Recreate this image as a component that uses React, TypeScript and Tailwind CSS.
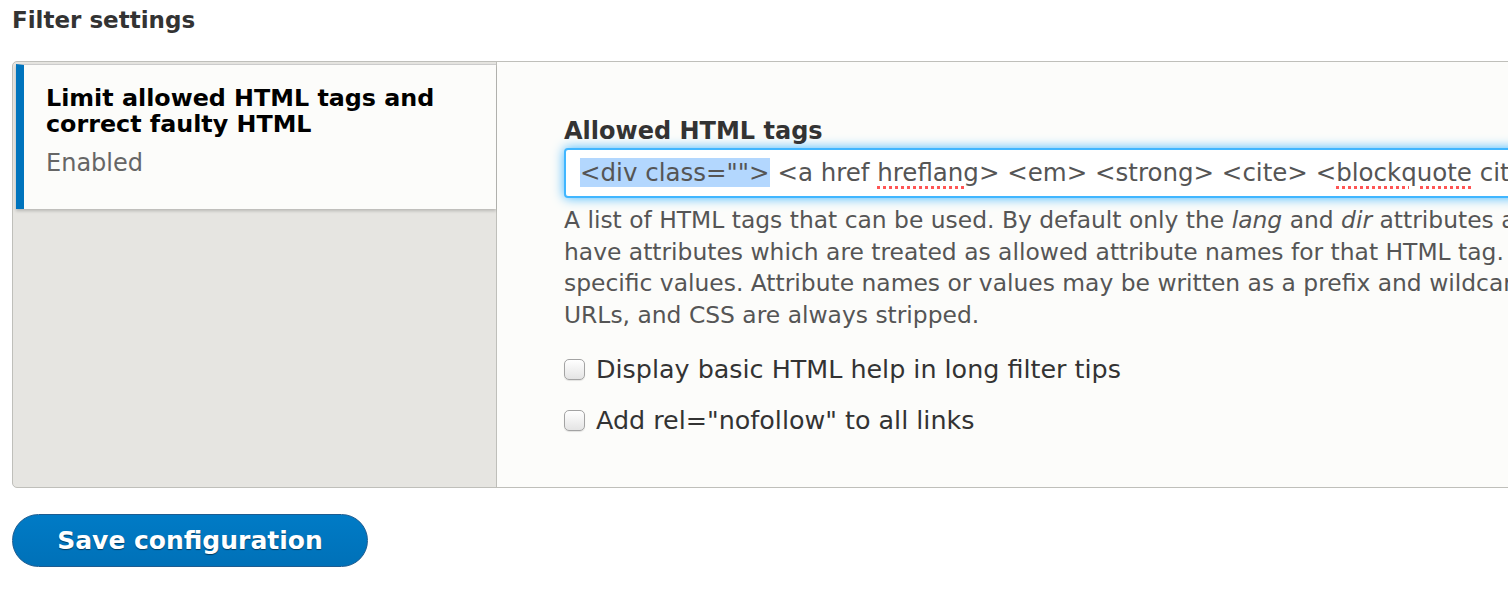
import React from "react";

function Checkbox({ label }: { label: string }) {
  return (
    <label className="flex items-center gap-[11px] leading-[32px] text-[25.4px] text-[#333]">
      <span className="inline-block h-[21px] w-[21px] shrink-0 rounded-[5px] border border-[#a3a3a3] bg-gradient-to-b from-white to-[#e4e4e4] shadow-[0_1px_1px_rgba(0,0,0,0.1)]" />
      {label}
    </label>
  );
}

export default function App() {
  return (
    <div
      className="h-[614px] w-[1508px] overflow-hidden bg-white pl-[12px]"
      style={{ fontFamily: '"DejaVu Sans", Verdana, sans-serif' }}
    >
      <h2 className="pt-[6px] text-[23px] font-bold leading-[28px] text-[#333]">Filter settings</h2>

      <div className="mt-[27px] flex h-[427px] w-[1600px] rounded-l-[5px] border border-[#bfbfba] bg-[#e6e5e1]">
        {/* vertical tabs menu */}
        <div className="w-[484px] shrink-0 border-r border-[#bfbfba] pt-[2px] pl-[3px]">
          <div className="border-t border-[#ccc] border-l-[8px] border-l-[#0074bd] bg-[#fcfcfa] pt-[20px] pb-[33px] pl-[22px] shadow-[0_2px_3px_rgba(0,0,0,0.2)]">
            <div className="text-[23.8px] font-bold leading-[26px] text-black">
              Limit allowed HTML tags and
              <br />
              correct faulty HTML
            </div>
            <div className="mt-[13px] text-[24px] leading-[26px] text-[#666]">Enabled</div>
          </div>
        </div>

        {/* pane */}
        <div className="flex-1 bg-[#fcfcfa] pt-[54px] pl-[67px]">
          <div className="text-[24px] font-bold leading-[30px] text-[#333]">Allowed HTML tags</div>
          <div className="mt-[2px] h-[50px] w-[1100px] overflow-hidden rounded-[4px] border-2 border-[#40b6ff] bg-white pt-[7px] pl-[14px] text-[24.5px] leading-[31px] whitespace-pre text-[#555] shadow-[0_0_12px_#40b6ff]">
            <span className="bg-[#b3d7fe]">&lt;div class=""&gt;</span>
            {" <a href "}
            <span className="underline decoration-[#f55] decoration-dotted decoration-[3px] underline-offset-[5px]">hreflang</span>
            {"> <em> <strong> <cite> <"}
            <span className="underline decoration-[#f55] decoration-dotted decoration-[3px] underline-offset-[5px]">blockquote</span>
            {" cite> <code> <ul type>"}
          </div>
          <div className="mt-[7px] text-[23.4px] leading-[31.5px] whitespace-nowrap text-[#555]">
            <div>
              A list of HTML tags that can be used. By default only the <em>lang</em> and <em>dir</em> attributes are allowed for all HTML tags.
            </div>
            <div>have attributes which are treated as allowed attribute names for that HTML tag. Each attribute may allow all values</div>
            <div>specific values. Attribute names or values may be written as a prefix and wildcard like jump-*.</div>
            <div>URLs, and CSS are always stripped.</div>
          </div>
          <div className="mt-[22px] flex flex-col gap-[19px]">
            <Checkbox label="Display basic HTML help in long filter tips" />
            <Checkbox label={'Add rel="nofollow" to all links'} />
          </div>
        </div>
      </div>

      <button className="mt-[26px] flex h-[53px] w-[356px] items-center justify-center rounded-full border border-[#1e5c90] bg-gradient-to-b from-[#007bc6] to-[#0071b8] text-[25px] font-bold text-white [text-shadow:0_1px_1px_rgba(0,0,0,0.5)]">
        Save configuration
      </button>
    </div>
  );
}
